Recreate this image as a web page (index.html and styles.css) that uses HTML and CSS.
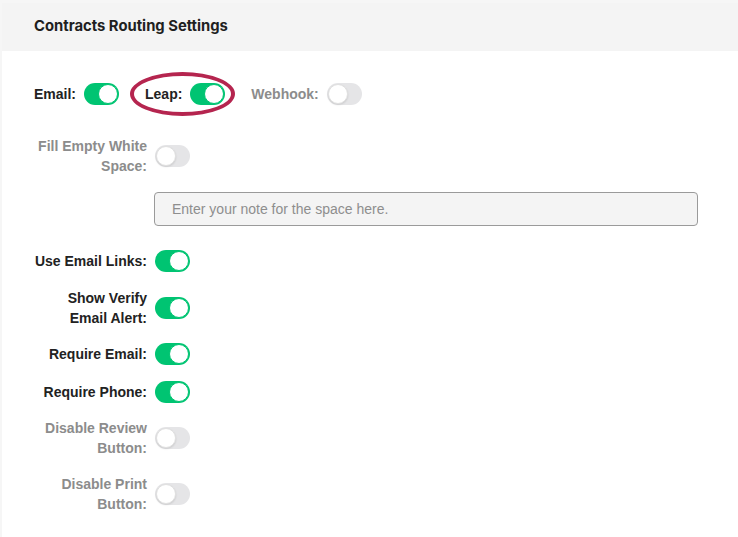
FILE: index.html
```
<!DOCTYPE html>
<html lang="en">
<head>
  <meta charset="UTF-8">
  <meta name="viewport" content="width=device-width, initial-scale=1.0">
  <title>Contracts Routing Settings</title>
  <link rel="stylesheet" href="styles.css">
</head>
<body>
  <div class="card">
    <div class="card-header">Contracts Routing Settings</div>
    <div class="card-body">
      <div class="channels">
        <div class="channel">
          <span class="label">Email:</span>
          <span class="toggle on"></span>
        </div>
        <div class="channel highlighted">
          <span class="label">Leap:</span>
          <span class="toggle on"></span>
          <span class="ring"></span>
        </div>
        <div class="channel">
          <span class="label muted">Webhook:</span>
          <span class="toggle"></span>
        </div>
      </div>

      <div class="setting fill-space">
        <span class="setting-label muted">Fill Empty White Space:</span>
        <span class="toggle"></span>
      </div>
      <div class="note-row">
        <input type="text" class="note" placeholder="Enter your note for the space here.">
      </div>

      <div class="settings">
        <div class="setting">
          <span class="setting-label">Use Email Links:</span>
          <span class="toggle on"></span>
        </div>
        <div class="setting">
          <span class="setting-label">Show Verify Email Alert:</span>
          <span class="toggle on"></span>
        </div>
        <div class="setting">
          <span class="setting-label">Require Email:</span>
          <span class="toggle on"></span>
        </div>
        <div class="setting">
          <span class="setting-label">Require Phone:</span>
          <span class="toggle on"></span>
        </div>
        <div class="setting">
          <span class="setting-label muted">Disable Review Button:</span>
          <span class="toggle"></span>
        </div>
        <div class="setting">
          <span class="setting-label muted">Disable Print Button:</span>
          <span class="toggle"></span>
        </div>
      </div>
    </div>
  </div>
</body>
</html>
```

FILE: styles.css
```
body {
  margin: 0;
  background-color: #f6f6f6;
  font-family: "Liberation Sans", Arial, sans-serif;
  color: #222;
}
.card {
  margin: 3px 0 0 2px;
  background-color: #fff;
  min-height: 534px;
}
.card-header {
  background-color: #f4f4f4;
  height: 48px;
  line-height: 47px;
  padding-left: 32px;
  font-family: Inter, "Noto Sans", sans-serif;
  font-weight: 700;
  font-size: 14.8px;
  color: #1f1f1f;
}
.card-body {
  padding: 32px 0 0 32px;
}
.channels {
  display: flex;
  align-items: center;
  gap: 26px;
}
.channel {
  position: relative;
  display: flex;
  align-items: center;
  gap: 8px;
}
.label {
  font-weight: bold;
  font-size: 14px;
}
.muted {
  color: #8c8c8c;
}
.ring {
  position: absolute;
  top: -11px;
  bottom: -11px;
  left: -15px;
  right: -10px;
  border: 4px solid #b5254f;
  border-radius: 50%;
}
.toggle {
  position: relative;
  display: inline-block;
  width: 35px;
  height: 22px;
  border-radius: 11px;
  background-color: #e5e5e7;
  flex-shrink: 0;
}
.toggle::after {
  content: "";
  position: absolute;
  top: 1px;
  left: 1px;
  width: 18px;
  height: 18px;
  border-radius: 50%;
  background-color: #fff;
  border: 1px solid #e0e0e0;
  box-shadow: 0 1px 2px rgba(0, 0, 0, 0.12);
}
.toggle.on {
  background-color: #00c472;
}
.toggle.on::after {
  left: 14px;
  border-color: #00c472;
  box-shadow: none;
}
.setting {
  display: flex;
  align-items: center;
  gap: 8px;
}
.setting-label {
  width: 113px;
  text-align: right;
  font-weight: bold;
  font-size: 14px;
  line-height: 20px;
}
.fill-space {
  margin-top: 31px;
}
.note-row {
  margin: 16px 0 24px 120px;
}
.note {
  box-sizing: border-box;
  width: 544px;
  height: 34px;
  padding: 0 17px;
  border: 1px solid #9a9a9a;
  border-radius: 4px;
  background-color: #f4f4f4;
  font-family: "Liberation Sans", Arial, sans-serif;
  font-size: 14px;
}
.note::placeholder {
  color: #8e8e8e;
}
.settings {
  display: flex;
  flex-direction: column;
  gap: 15.6px;
}
```
